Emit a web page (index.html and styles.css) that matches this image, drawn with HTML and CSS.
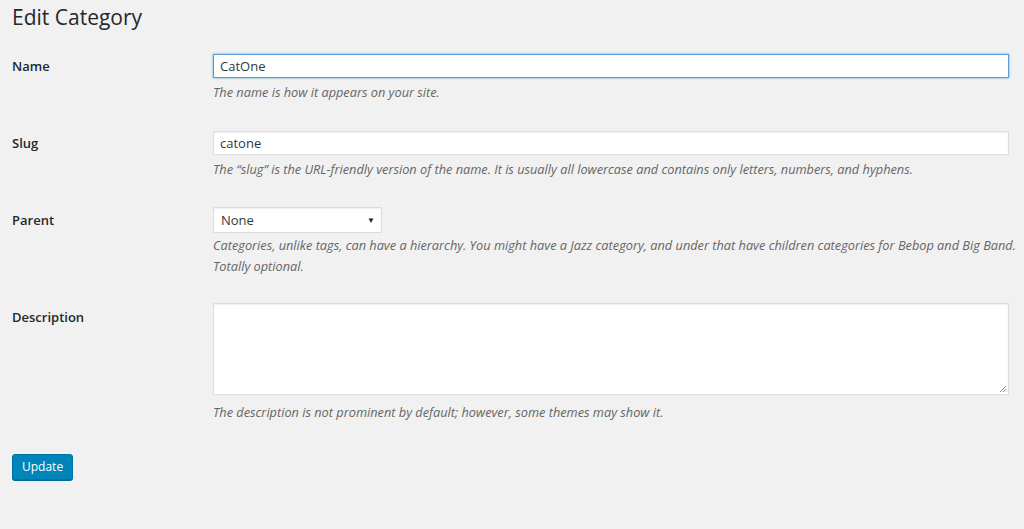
FILE: index.html
```html
<!DOCTYPE html>
<html lang="en">
<head>
<meta charset="utf-8">
<title>Edit Category</title>
<link rel="stylesheet" href="styles.css">
</head>
<body>
<div class="wrap">
  <h1 class="title">Edit Category</h1>
  <form class="form">
    <div class="row row-name">
      <label class="label" for="name">Name</label>
      <div class="field">
        <input class="input input-focus" id="name" type="text" value="CatOne">
        <p class="desc">The name is how it appears on your site.</p>
      </div>
    </div>
    <div class="row row-slug">
      <label class="label" for="slug">Slug</label>
      <div class="field">
        <input class="input" id="slug" type="text" value="catone">
        <p class="desc">The “slug” is the URL-friendly version of the name. It is usually all lowercase and contains only letters, numbers, and hyphens.</p>
      </div>
    </div>
    <div class="row row-parent">
      <label class="label" for="parent">Parent</label>
      <div class="field">
        <div class="select" id="parent"><span class="select-text">None</span><span class="select-arrow">▼</span></div>
        <p class="desc desc-parent">Categories, unlike tags, can have a hierarchy. You might have a Jazz category, and under that have children categories for Bebop and Big Band. Totally optional.</p>
      </div>
    </div>
    <div class="row row-desc">
      <label class="label label-top" for="description">Description</label>
      <div class="field">
        <div class="textarea" id="description"><svg class="grip" width="8" height="8" viewBox="0 0 8 8"><path d="M7 1L1 7M7 4L4 7M7 6.5L6.5 7" stroke="#8a8a8a" stroke-width="1" fill="none"/></svg></div>
        <p class="desc desc-area">The description is not prominent by default; however, some themes may show it.</p>
      </div>
    </div>
    <div class="actions">
      <button class="button" type="button">Update</button>
    </div>
  </form>
</div>
</body>
</html>
```

FILE: styles.css
```css
html, body {
  margin: 0;
  padding: 0;
  background: #f1f1f1;
}
body {
  font-family: "Open Sans", "Liberation Sans", sans-serif;
  color: #23282d;
  font-size: 13px;
  width: 1024px;
  height: 529px;
  overflow: hidden;
}
.wrap {
  padding: 3px 0 0 12px;
}
.title {
  margin: 0;
  font-size: 21px;
  line-height: 29px;
  font-weight: 400;
  color: #23282d;
}
.form {
  margin-top: 22px;
}
.row {
  display: grid;
  grid-template-columns: 201px 1fr;
}
.row-slug { margin-top: 28px; }
.row-parent { margin-top: 27px; }
.row-desc { margin-top: 26px; }
.label {
  font-weight: 600;
  font-size: 13px;
  line-height: 24px;
  color: #23282d;
}
.row-parent .label { line-height: 26px; }
.label-top { line-height: 28px; }
.field {
  display: flex;
  flex-direction: column;
  align-items: flex-start;
}
.input {
  box-sizing: border-box;
  height: 24px;
  width: 796px;
  margin: 0;
  padding: 0 6px;
  border: 1px solid #ddd;
  background: #fff;
  box-shadow: inset 0 1px 2px rgba(0,0,0,0.07);
  font-family: "Open Sans", "Liberation Sans", sans-serif;
  font-size: 13px;
  color: #32373c;
  outline: none;
}
.input-focus {
  border-color: #5b9dd9;
  box-shadow: 0 0 2px rgba(30,140,190,0.8);
}
.desc {
  margin: 4px 0 0;
  font-size: 12.75px;
  line-height: 21px;
  font-style: italic;
  color: #666;
}
.desc-parent { margin-top: 2px; }
.desc-area { margin-top: 7px; }
.select {
  box-sizing: border-box;
  width: 169px;
  height: 26px;
  border: 1px solid #ddd;
  background: #fff;
  box-shadow: inset 0 1px 2px rgba(0,0,0,0.07);
  display: flex;
  align-items: center;
  justify-content: space-between;
  padding: 0 6px 0 7px;
  font-size: 13px;
  color: #32373c;
}
.select-arrow {
  font-size: 8px;
  color: #222;
  margin-bottom: 2px;
}
.textarea {
  box-sizing: border-box;
  width: 796px;
  height: 92px;
  border: 1px solid #ddd;
  background: #fff;
  box-shadow: inset 0 1px 2px rgba(0,0,0,0.07);
  display: flex;
  align-items: flex-end;
  justify-content: flex-end;
  padding: 0 1px 1px 0;
}
.grip { display: block; }
.actions {
  margin-top: 31px;
}
.button {
  box-sizing: border-box;
  height: 26px;
  padding: 0 9px 1px;
  background: #0085ba;
  border: 1px solid #0073aa;
  border-radius: 3px;
  box-shadow: 0 1px 0 #006799;
  color: #fff;
  font-family: "Open Sans", "Liberation Sans", sans-serif;
  font-size: 12px;
  line-height: 22px;
  cursor: pointer;
}
```
